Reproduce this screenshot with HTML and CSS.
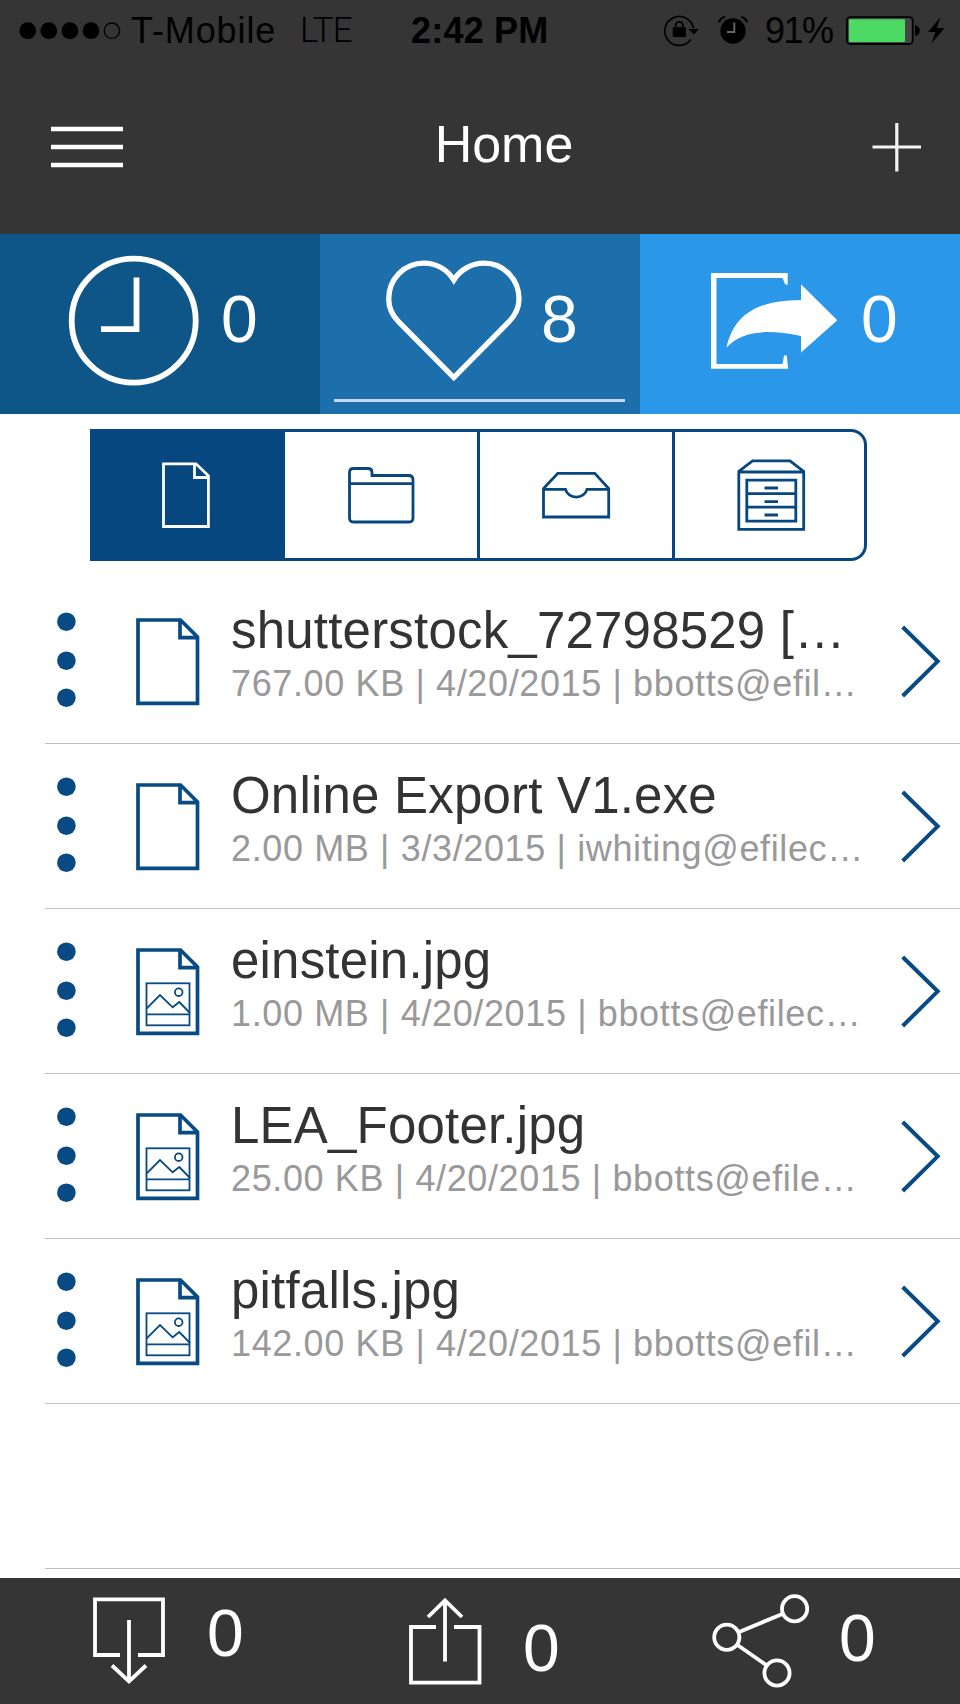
FILE: index.html
```html
<!DOCTYPE html>
<html lang="en">
<head>
  <meta charset="UTF-8">
  <title>Home</title>
  <link rel="stylesheet" href="styles.css">
</head>
<body>
  <!-- Shared icons -->
  <svg class="sprite">
    <symbol id="dots" viewBox="0 0 20 96">
      <circle cx="9.400" cy="9.700" r="9.300"/>
      <circle cx="9.400" cy="48.700" r="9.300"/>
      <circle cx="9.400" cy="85.700" r="9.300"/>
    </symbol>
    <symbol id="file" viewBox="0 0 64 96">
      <path d="M2 8h42.500l17 17V91.300H2zM44 8v17.700h17.500" fill="none" stroke="currentColor" stroke-width="3.700"/>
    </symbol>
    <symbol id="image" viewBox="0 0 64 96">
      <path d="M2 8h42.500l17 17V91.300H2zM44 8v17.700h17.500" fill="none" stroke="currentColor" stroke-width="3.700"/>
      <g fill="none" stroke="currentColor" stroke-width="1.800">
        <rect x="10.500" y="41.300" width="43" height="42"/>
        <path d="M10.700 72.300h43M10.700 66.300L24 53l12.700 12.300 6.600-5.300L54 71"/>
        <circle cx="42.700" cy="50.200" r="3.800"/>
      </g>
    </symbol>
    <symbol id="chevron" viewBox="0 0 44 96">
      <path d="M2.700 15L37.700 49.300 2.700 84" fill="none" stroke="currentColor" stroke-width="4"/>
    </symbol>
  </svg>

  <header class="header">
    <div class="status">
      <svg width="130" height="61">
        <circle cx="27.700" cy="30.700" r="8.400"/>
        <circle cx="48.800" cy="30.700" r="8.400"/>
        <circle cx="69.900" cy="30.700" r="8.400"/>
        <circle cx="91" cy="30.700" r="8.400"/>
        <circle cx="111.900" cy="30.700" r="7.700" fill="none" stroke="#000" stroke-width="1.300"/>
      </svg>
      <span class="carrier">T-Mobile</span>
      <span class="network">LTE</span>
      <span class="time">2:42 PM</span>
      <!-- rotation lock -->
      <svg viewBox="662 0 50 61" width="50" height="61">
        <path d="M691 39.500A14.500 14.500 0 1 1 693.500 28" fill="none" stroke="#000" stroke-width="1.700"/>
        <path d="M688.500 29h10.500l-5 5.500z"/>
        <rect x="672.700" y="27.300" width="13.200" height="9.700" rx="1"/>
        <path d="M675.700 28v-2.500a3.600 3.600 0 0 1 7.200 0V28" fill="none" stroke="#000" stroke-width="1.800"/>
      </svg>
      <!-- alarm -->
      <svg viewBox="712 0 52 61" width="52" height="61">
        <circle cx="733" cy="31" r="12.700"/>
        <path d="M719 22.500q1-4.500 6-5.500M747 22.500q-1-4.500-6-5.500" fill="none" stroke="#000" stroke-width="2.200"/>
        <path d="M734.300 22.500v9.500H727" fill="none" stroke="#666" stroke-width="1.900"/>
      </svg>
      <span class="percent">91%</span>
      <svg viewBox="844 0 80 61" width="80" height="61">
        <rect x="846.900" y="17.200" width="65.800" height="26.800" rx="3.500" fill="#444544" stroke="#000" stroke-width="1.800"/>
        <rect x="849" y="19.300" width="56" height="22.700" rx="1" fill="#4cd964"/>
        <path d="M915 25q4.700 1 4.700 5.500T915 36z"/>
      </svg>
      <svg viewBox="924 0 36 61" width="36" height="61">
        <path d="M940.500 17L928 32h7.500L931.500 43.500 944.500 28H937z"/>
      </svg>
    </div>
    <div class="nav">
      <svg viewBox="51 117 72 60" width="72" height="60">
        <path d="M51 129h72M51 147h72M51 165h72" stroke="#fff" stroke-width="4.400"/>
      </svg>
      <h1>Home</h1>
      <svg viewBox="872 117 50 60" width="50" height="60">
        <path d="M872.500 147h48.500M896.800 123v48.500" stroke="#f4f4f4" stroke-width="3.200"/>
      </svg>
    </div>
  </header>

  <div class="tiles">
    <div class="tile recent">
      <svg viewBox="0 234 221 180" width="221" height="180">
        <g fill="none" stroke="#fff" stroke-width="5.800">
          <circle cx="133.700" cy="320.700" r="62"/>
          <path d="M136.500 277.500V329.200H101"/>
        </g>
      </svg>
      <span>0</span>
    </div>
    <div class="tile favorite active">
      <svg viewBox="320 234 221 180" width="221" height="180">
        <path d="M453.800 280C447 269.500 436 263.200 424 263.200C404 263.200 388.700 279 388.700 299C388.700 308 392 315 398.500 321.700L453.800 377.500L509 321.700C515.500 315 519 308 519 299C519 279 503.500 263.200 484 263.200C472 263.200 460.500 269.500 453.800 280z" fill="none" stroke="#fff" stroke-width="5.300"/>
      </svg>
      <span>8</span>
    </div>
    <div class="tile shared">
      <svg viewBox="640 234 221 180" width="221" height="180">
        <path d="M711 273h76.700v11.500h-2.500L782.500 278H716.500v86h66l1.500-8.500h2.700L788.200 368.800H711z" fill="#fff"/>
        <path d="M726.500 347.500C734 315 756 300.500 801 300V284.300L837.300 320.300 801 352.500V336C770 330 744 329 726.500 347.500z" fill="#fff"/>
      </svg>
      <span>0</span>
    </div>
  </div>

  <div class="segments">
    <div class="segment active">
      <svg viewBox="90 432 192 126" width="192" height="126">
        <path d="M163.500 463.800h32.500l12.400 12v50.700h-44.900zM194.500 463.800v13.700h13.900"/>
      </svg>
    </div>
    <div class="segment">
      <svg viewBox="285 432 192 126" width="192" height="126">
        <path d="M349.500 518V472.500q0-4 4-4H368q4 0 4 4v3h36.500q4.500 0 4.500 4.500v38q0 4-4 4H353.500q-4 0-4-4zM349.500 483.700H413"/>
      </svg>
    </div>
    <div class="segment">
      <svg viewBox="480 432 192 126" width="192" height="126">
        <path d="M543.500 517V488.500L557.800 473.300h37L608.700 488.500V517zM543.500 489.300H565.500a11 10 0 0 0 21.500 0H608.700"/>
      </svg>
    </div>
    <div class="segment">
      <svg viewBox="675 432 192 126" width="192" height="126">
        <path d="M738.800 529.300V471.500L752.500 460.800h37.500L803.700 471.500V529.300zM738.800 472h64.700M746.800 480.200h49v41h-49zM746.800 493.700h49M746.800 507.200h49M764.500 488h13.500M764.500 501.700h13.500M764.500 515h13.500"/>
      </svg>
    </div>
  </div>

  <ul class="files">
    <li>
      <svg class="dots"><use href="#dots"/></svg>
      <svg class="icon"><use href="#file"/></svg>
      <div class="info">
        <h2>shutterstock_72798529 […</h2>
        <p>767.00 KB | 4/20/2015 | bbotts@efil…</p>
      </div>
      <svg class="chevron"><use href="#chevron"/></svg>
    </li>
    <li>
      <svg class="dots"><use href="#dots"/></svg>
      <svg class="icon"><use href="#file"/></svg>
      <div class="info">
        <h2>Online Export V1.exe</h2>
        <p>2.00 MB | 3/3/2015 | iwhiting@efilec…</p>
      </div>
      <svg class="chevron"><use href="#chevron"/></svg>
    </li>
    <li>
      <svg class="dots"><use href="#dots"/></svg>
      <svg class="icon"><use href="#image"/></svg>
      <div class="info">
        <h2>einstein.jpg</h2>
        <p>1.00 MB | 4/20/2015 | bbotts@efilec…</p>
      </div>
      <svg class="chevron"><use href="#chevron"/></svg>
    </li>
    <li>
      <svg class="dots"><use href="#dots"/></svg>
      <svg class="icon"><use href="#image"/></svg>
      <div class="info">
        <h2>LEA_Footer.jpg</h2>
        <p>25.00 KB | 4/20/2015 | bbotts@efile…</p>
      </div>
      <svg class="chevron"><use href="#chevron"/></svg>
    </li>
    <li>
      <svg class="dots"><use href="#dots"/></svg>
      <svg class="icon"><use href="#image"/></svg>
      <div class="info">
        <h2>pitfalls.jpg</h2>
        <p>142.00 KB | 4/20/2015 | bbotts@efil…</p>
      </div>
      <svg class="chevron"><use href="#chevron"/></svg>
    </li>
    <li></li>
  </ul>

  <footer class="toolbar">
    <div class="tool download">
      <svg viewBox="0 1578 207 126" width="207" height="126">
        <path d="M120 1655H95V1599.300H163V1655H138M129 1620v61M112 1665.500L129 1681.500 146 1665.500"/>
      </svg>
      <span>0</span>
    </div>
    <div class="tool upload">
      <svg viewBox="315 1578 208 126" width="208" height="126">
        <path d="M436 1627H411V1682.700H479.500V1627H454M445 1661.500V1601M428 1617L445 1600.500 462 1617"/>
      </svg>
      <span>0</span>
    </div>
    <div class="tool share">
      <svg viewBox="630 1578 209 126" width="209" height="126">
        <circle cx="794.600" cy="1608.700" r="12.600"/>
        <circle cx="726.800" cy="1637.300" r="12.600"/>
        <circle cx="777" cy="1673" r="12.600"/>
        <path d="M738.500 1632.200L783 1613.700M737.500 1645L766.500 1665.300"/>
      </svg>
      <span>0</span>
    </div>
  </footer>
</body>
</html>
```
FILE: styles.css
```css
* {
  box-sizing: border-box;
}
body {
  margin: 0;
  width: 960px;
  height: 1704px;
  overflow: hidden;
  display: flex;
  flex-direction: column;
  background: #fff;
  font-family: "Liberation Sans", Arial, sans-serif;
}
h1, h2, p, ul {
  margin: 0;
  padding: 0;
  font-weight: normal;
}
svg {
  display: block;
  flex: none;
}
.sprite {
  display: none;
}

/* Status bar and title */
.header {
  height: 234px;
  background: #343534;
}
.status {
  display: grid;
  grid-template-columns: 131px 169px 111px 252px 50px 52px 80px 80px 35px;
  margin-right: -1px;
  height: 61px;
  line-height: 62px;
  font-size: 36px;
  color: #000;
  white-space: nowrap;
}
.status svg:nth-of-type(n+2) {
  margin-left: -1px;
}
.carrier {
  letter-spacing: 0.9px;
}
.network {
  font-family: Roboto, sans-serif;
  font-weight: 300;
  font-size: 35px;
  letter-spacing: -1px;
}
.time {
  font-weight: bold;
  letter-spacing: 0.2px;
}
.percent {
  letter-spacing: -1.5px;
}
.nav {
  display: flex;
  justify-content: space-between;
  padding: 0 38px 0 51px;
}
.nav svg {
  margin-top: 56px;
}
.nav h1 {
  margin-left: 13px;
  line-height: 167px;
  font-size: 52px;
  color: #fff;
}

/* Counters */
.tiles {
  display: grid;
  grid-template-columns: repeat(3, 1fr);
  height: 180px;
}
.tile {
  position: relative;
  display: flex;
  line-height: 171px;
  font-size: 66px;
  color: #fff;
}
.recent {
  background: #0f5688;
}
.favorite {
  background: #1d6fac;
}
.shared {
  background: #2b97e8;
}
.tile.active::after {
  content: "";
  position: absolute;
  left: 14px;
  right: 15px;
  bottom: 12px;
  height: 3px;
  background: #c8d8ea;
}

/* Type filter */
.segments {
  display: flex;
  margin: 15px 93px 0 90px;
  border: 3px solid #074780;
  border-left: none;
  border-radius: 0 16px 16px 0;
  height: 132px;
  overflow: hidden;
}
.segment {
  width: 195px;
  flex: none;
  border-right: 3px solid #074780;
  color: #074780;
}
.segment:last-child {
  border-right: none;
}
.segment.active {
  background: #074780;
  color: #fff;
}
.segment path {
  fill: none;
  stroke: currentColor;
  stroke-width: 2.8;
}

/* File list */
.files {
  flex: 1;
  padding: 18px 0 0 45px;
  list-style: none;
}
.files li {
  display: flex;
  height: 165px;
  padding: 33px 0 0 12px;
  border-bottom: 1px solid #c0c0c0;
}
.files svg {
  height: 96px;
  color: #074a84;
  fill: #074a84;
}
.dots {
  width: 20px;
}
.icon {
  width: 64px;
  margin-left: 59px;
}
.info {
  width: 669px;
  margin-left: 31px;
  white-space: nowrap;
}
.info h2 {
  line-height: 38px;
  font-size: 51px;
  letter-spacing: 0.2px;
  color: #333;
}
.info p {
  line-height: 68px;
  font-size: 36px;
  letter-spacing: 0.63px;
  color: #999;
}
.chevron {
  width: 44px;
}

/* Bottom bar */
.toolbar {
  display: grid;
  grid-template-columns: 315px 315px 330px;
  height: 126px;
  background: #343534;
}
.tool {
  display: flex;
  font-size: 66px;
  color: #fff;
}
.tool path, .tool circle {
  fill: none;
  stroke: #fff;
  stroke-width: 3.8;
}
.download {
  line-height: 111px;
}
.upload {
  line-height: 141px;
}
.share {
  line-height: 121px;
}
```
